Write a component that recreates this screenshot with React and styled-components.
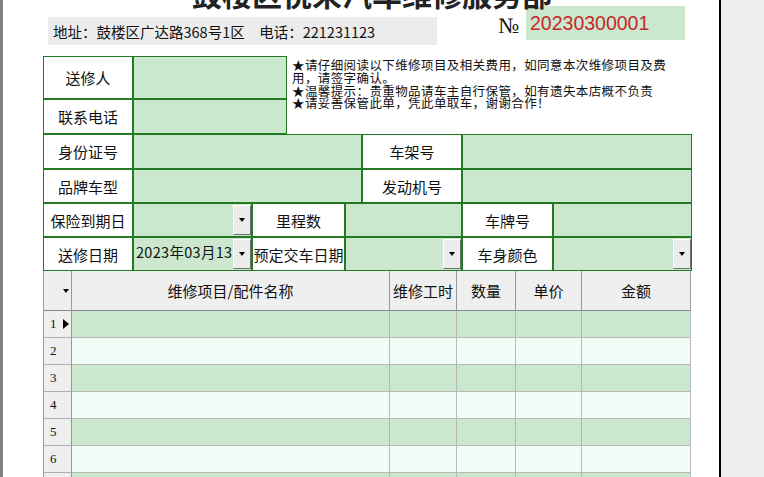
import styled, { createGlobalStyle } from "styled-components";

const GREEN = "#237a23";
const FILL = "#cbe7cd";
const LIGHT = "#effdf6";

const GlobalStyle = createGlobalStyle`
  html, body {
    margin: 0;
    padding: 0;
    background: #fff;
  }
  body {
    font-family: "Noto Sans CJK SC", "Noto Sans", sans-serif;
    color: #111;
  }
  * {
    box-sizing: border-box;
  }
`;

const Page = styled.div`
  width: 764px;
  height: 477px;
  overflow: hidden;
  display: flex;
  border-left: 3px solid #808080;
`;

const Main = styled.div`
  position: relative;
  width: 718px;
  height: 100%;
  border-right: 2px solid #000;
  padding-left: 40px;
`;

const Side = styled.div`
  flex: 1;
  background: #efefef;
`;

const Title = styled.div`
  position: absolute;
  top: -22px;
  left: 189px;
  font-size: 30px;
  line-height: 30px;
  font-weight: 700;
  color: #222;
  white-space: nowrap;
`;

const InfoRow = styled.div`
  display: flex;
  align-items: flex-start;
  height: 56px;
`;

const Address = styled.div`
  margin: 17px 0 0 5px;
  width: 389px;
  height: 28px;
  padding-left: 5px;
  display: flex;
  align-items: center;
  background: #ececec;
  font-size: 14.5px;
  white-space: pre;
`;

const NoMark = styled.div`
  margin: 15px 0 0 61px;
  width: 22px;
  font-family: "Liberation Serif", serif;
  font-size: 22px;
  line-height: 22px;
  color: #111;
`;

const NumberBox = styled.div`
  margin: 6px 0 0 6px;
  width: 159px;
  height: 34px;
  padding-left: 4px;
  display: flex;
  align-items: center;
  background: ${FILL};
  color: #c62a2a;
  font-family: "Liberation Sans", Arial, sans-serif;
  font-size: 19.5px;
`;

const TopSection = styled.div`
  display: flex;
`;

const LeftBlock = styled.div`
  width: 244px;
`;

const Notes = styled.div`
  width: 388px;
  padding: 3px 0 0 5px;
  font-size: 12.5px;
  letter-spacing: 0.4px;
  line-height: 12.8px;
  color: #111;
`;

const Row = styled.div`
  display: flex;
  height: ${(p) => p.$h}px;
`;

const Label = styled.div`
  width: ${(p) => p.$w}px;
  border: 1px solid ${GREEN};
  background: #fff;
  display: flex;
  align-items: center;
  justify-content: center;
  font-size: 15px;
  white-space: nowrap;
`;

const Field = styled.div`
  width: ${(p) => p.$w}px;
  border: 1px solid ${GREEN};
  background: ${FILL};
  display: flex;
  align-items: flex-start;
  overflow: hidden;
`;

const FieldText = styled.span`
  flex: 1;
  min-width: 0;
  overflow: hidden;
  white-space: nowrap;
  padding: 3px 0 0 2px;
  font-size: 14.5px;
  letter-spacing: 0.3px;
`;

const DropButton = styled.div`
  margin: 1px 0 1px auto;
  align-self: stretch;
  width: 18px;
  flex: none;
  background: #ececec;
  border: 1px solid;
  border-color: #fff #6f6f6f #6f6f6f #fff;
  display: flex;
  align-items: center;
  justify-content: center;

  &::after {
    content: "";
    border-left: 3.5px solid transparent;
    border-right: 3.5px solid transparent;
    border-top: 4px solid #000;
  }
`;

const Table = styled.div`
  display: grid;
  grid-template-columns: 28px 318px 67px 59px 66px 109px;
  width: 647px;
  border-left: 1px solid #a0a0a0;
`;

const HeadCell = styled.div`
  height: 40px;
  background: #efefef;
  border-right: 1px solid #9a9a9a;
  border-bottom: 1px solid #8a8a8a;
  display: flex;
  align-items: center;
  justify-content: ${(p) => (p.$corner ? "flex-end" : "center")};
  padding-right: ${(p) => (p.$corner ? "2px" : "0")};
  font-size: 15px;
  white-space: nowrap;
`;

const SmallDown = styled.span`
  border-left: 3.5px solid transparent;
  border-right: 3.5px solid transparent;
  border-top: 4px solid #000;
`;

const RowHead = styled.div`
  height: 27px;
  background: #efefef;
  border-right: 1px solid #9a9a9a;
  border-bottom: 1px solid #b0b0b0;
  display: flex;
  align-items: center;
  padding-left: 6px;
  font-family: "Liberation Serif", serif;
  font-size: 13px;
`;

const Pointer = styled.span`
  margin-left: 6px;
  border-top: 5px solid transparent;
  border-bottom: 5px solid transparent;
  border-left: 6px solid #000;
`;

const BodyCell = styled.div`
  height: 27px;
  background: ${(p) => (p.$odd ? FILL : LIGHT)};
  border-right: 1px solid #b8b8b8;
  border-bottom: 1px solid #b8b8b8;
`;

const columns = ["维修项目/配件名称", "维修工时", "数量", "单价", "金额"];
const rows = [1, 2, 3, 4, 5, 6, 7];

export default function App() {
  return (
    <>
      <GlobalStyle />
      <Page>
        <Main>
          <Title>鼓楼区悦来汽车维修服务部</Title>
          <InfoRow>
            <Address>地址：鼓楼区广达路368号1区　电话：221231123</Address>
            <NoMark>№</NoMark>
            <NumberBox>20230300001</NumberBox>
          </InfoRow>

          <TopSection>
            <LeftBlock>
              <Row $h={43}>
                <Label $w={90}>送修人</Label>
                <Field $w={154} />
              </Row>
              <Row $h={35}>
                <Label $w={90}>联系电话</Label>
                <Field $w={154} />
              </Row>
            </LeftBlock>
            <Notes>
              ★请仔细阅读以下维修项目及相关费用，如同意本次维修项目及费用，请签字确认。
              <br />
              ★温馨提示：贵重物品请车主自行保管，如有遗失本店概不负责
              <br />
              ★请妥善保管此单，凭此单取车，谢谢合作！
            </Notes>
          </TopSection>

          <Row $h={35}>
            <Label $w={90}>身份证号</Label>
            <Field $w={229} />
            <Label $w={100}>车架号</Label>
            <Field $w={230} />
          </Row>
          <Row $h={34}>
            <Label $w={90}>品牌车型</Label>
            <Field $w={229} />
            <Label $w={100}>发动机号</Label>
            <Field $w={230} />
          </Row>
          <Row $h={34}>
            <Label $w={90}>保险到期日</Label>
            <Field $w={119}>
              <DropButton />
            </Field>
            <Label $w={93}>里程数</Label>
            <Field $w={117} />
            <Label $w={91}>车牌号</Label>
            <Field $w={139} />
          </Row>
          <Row $h={34}>
            <Label $w={90}>送修日期</Label>
            <Field $w={119}>
              <FieldText>2023年03月13日</FieldText>
              <DropButton />
            </Field>
            <Label $w={93}>预定交车日期</Label>
            <Field $w={117}>
              <DropButton />
            </Field>
            <Label $w={91}>车身颜色</Label>
            <Field $w={139}>
              <DropButton />
            </Field>
          </Row>

          <Table>
            <HeadCell $corner>
              <SmallDown />
            </HeadCell>
            {columns.map((c) => (
              <HeadCell key={c}>{c}</HeadCell>
            ))}
            {rows.map((n) => (
              <>
                <RowHead key={`h${n}`}>
                  {n}
                  {n === 1 && <Pointer />}
                </RowHead>
                {columns.map((c) => (
                  <BodyCell key={`${n}${c}`} $odd={n % 2 === 1} />
                ))}
              </>
            ))}
          </Table>
        </Main>
        <Side />
      </Page>
    </>
  );
}
